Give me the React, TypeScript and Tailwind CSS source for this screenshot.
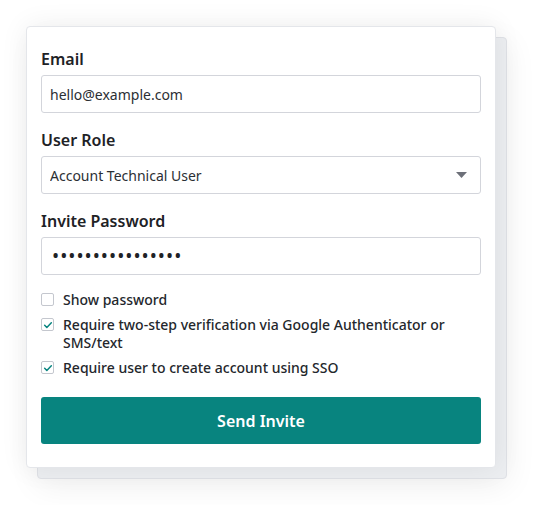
import { useState } from 'react';

function CheckRow({ label, checked, onToggle }: { label: string; checked: boolean; onToggle: () => void }) {
  return (
    <label className="flex items-start gap-[9px] cursor-pointer select-none">
      <span
        onClick={onToggle}
        className="mt-[2px] flex h-[13px] w-[13px] shrink-0 items-center justify-center rounded-[2px] border border-[#c4c7ce] bg-white"
      >
        {checked && (
          <svg className="h-[10px] w-[10px] text-[#08847f]" viewBox="0 0 12 12" fill="none">
            <path d="M2 6.4l2.6 2.5L10 3.3" stroke="currentColor" strokeWidth={1.8} strokeLinecap="round" strokeLinejoin="round" />
          </svg>
        )}
      </span>
      <span className="text-[14px] leading-[18px] font-[550] text-[#24272c]">{label}</span>
    </label>
  );
}

export default function App() {
  const [showPassword, setShowPassword] = useState(false);
  const [twoStep, setTwoStep] = useState(true);
  const [sso, setSso] = useState(true);

  return (
    <div className="min-h-[505px] w-[533px] bg-white pt-[26px] pl-[26px]" style={{ fontFamily: '"Noto Sans", "Open Sans", sans-serif' }}>
      <div className="relative w-[470px]">
        {/* back sheet */}
        <div className="absolute left-[11px] top-[11px] h-full w-full rounded-[4px] border border-[#dfe1e6] bg-[#eceef1] shadow-[0_6px_32px_rgba(0,0,0,0.07)]" />

        {/* card */}
        <div className="relative flex flex-col rounded-[4px] border border-[#e4e6ea] bg-white px-[14px] pt-[20px] pb-[23px] shadow-[0_0_28px_rgba(0,0,0,0.07)]">
          <label className="mb-[4px] text-[16px] leading-[24px] font-semibold text-[#1e2226]">Email</label>
          <input
            readOnly
            value="hello@example.com"
            className="h-[38px] w-full rounded-[3px] border border-[#d3d5db] bg-white px-[8px] text-[14px] text-[#2b2f34] outline-none"
          />

          <label className="mt-[15px] mb-[4px] text-[16px] leading-[24px] font-semibold text-[#1e2226]">User Role</label>
          <div className="relative">
            <select
              defaultValue="tech"
              className="h-[38px] w-full appearance-none rounded-[3px] border border-[#d3d5db] bg-white px-[8px] text-[14px] text-[#2b2f34] outline-none"
            >
              <option value="tech">Account Technical User</option>
              <option value="admin">Account Administrator</option>
            </select>
            <svg className="pointer-events-none absolute right-[14px] top-[16px] h-[6px] w-[11px] text-[#6d7079]" viewBox="0 0 11 6">
              <path d="M0 0h11L5.5 6z" fill="currentColor" />
            </svg>
          </div>

          <label className="mt-[15px] mb-[4px] text-[16px] leading-[24px] font-semibold text-[#1e2226]">Invite Password</label>
          <input
            readOnly
            type={showPassword ? 'text' : 'password'}
            value="invitepassword16"
            className="h-[38px] w-full rounded-[3px] border border-[#d3d5db] bg-white px-[10px] text-[19px] tracking-[1px] text-[#1e2226] outline-none"
          />

          <div className="mt-[16px] flex flex-col gap-[7px]">
            <CheckRow label="Show password" checked={showPassword} onToggle={() => setShowPassword(!showPassword)} />
            <CheckRow
              label="Require two-step verification via Google Authenticator or SMS/text"
              checked={twoStep}
              onToggle={() => setTwoStep(!twoStep)}
            />
            <CheckRow label="Require user to create account using SSO" checked={sso} onToggle={() => setSso(!sso)} />
          </div>

          <button className="mt-[20px] h-[47px] w-full rounded-[3px] bg-[#08847f] text-[16px] font-semibold text-white">
            Send Invite
          </button>
        </div>
      </div>
    </div>
  );
}
